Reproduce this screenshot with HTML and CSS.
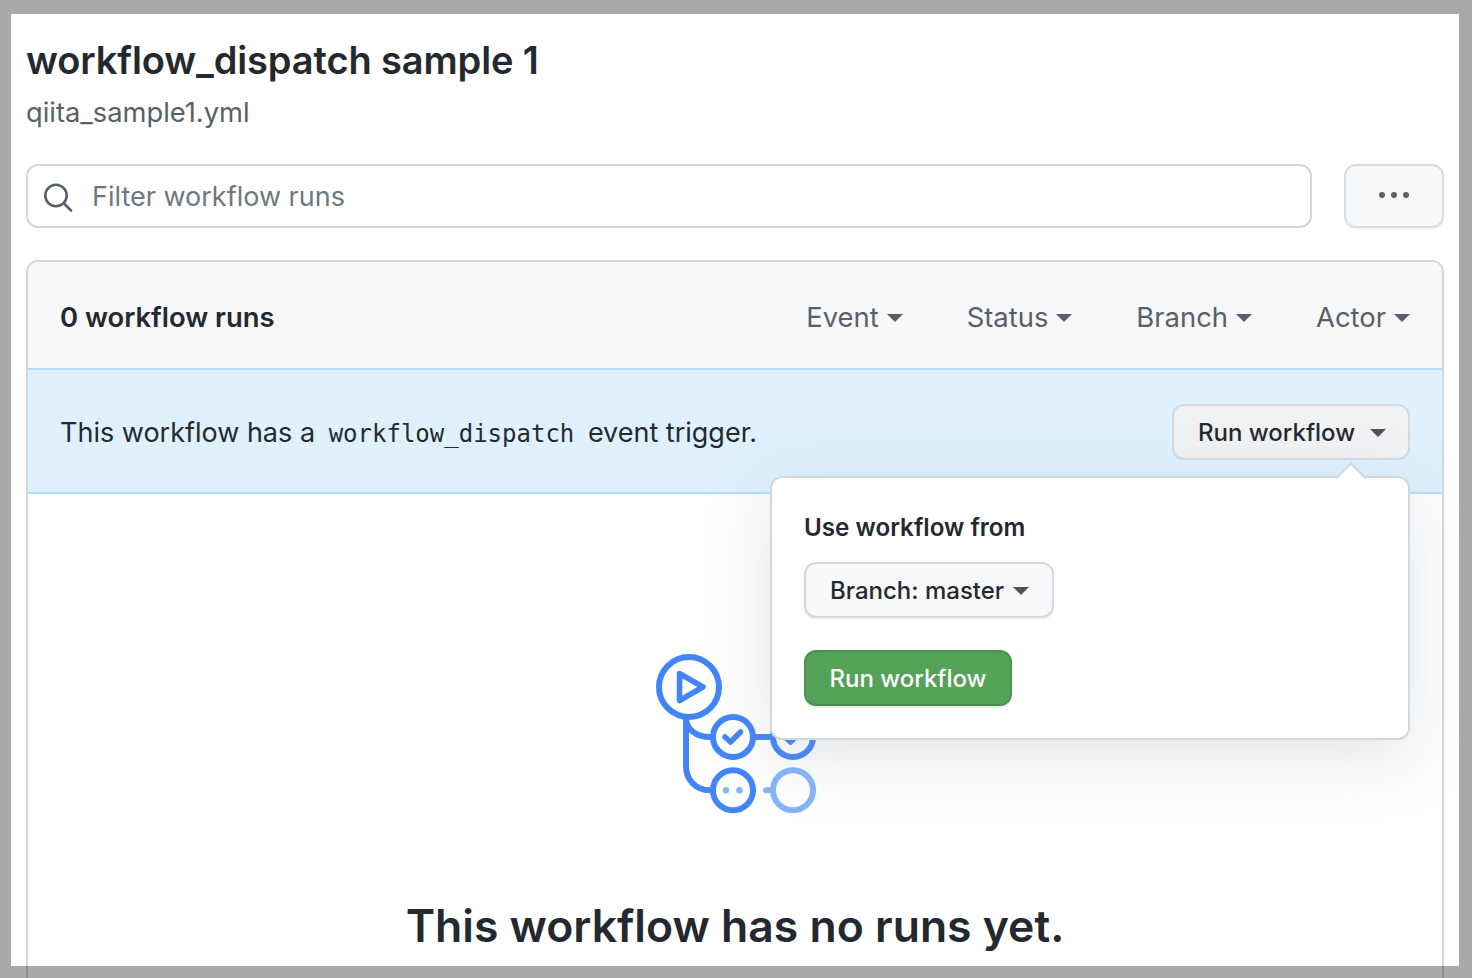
FILE: index.html
```html
<!DOCTYPE html>
<html lang="en">
<head>
<meta charset="utf-8">
<title>workflow_dispatch sample 1</title>
<link rel="stylesheet" href="styles.css">
</head>
<body>
<main class="page">
  <h1 class="title">workflow_dispatch sample 1</h1>
  <p class="subtitle">qiita_sample1.yml</p>
  <div class="search-row">
    <div class="search">
      <svg class="search-icon" viewBox="0 0 32 32" width="32" height="32" fill="none" stroke="#57606a" stroke-width="2.600" stroke-linecap="round"><circle cx="14" cy="15.500" r="10.700"/><path d="M22 23.500l7 7"/></svg>
      <span class="placeholder">Filter workflow runs</span>
    </div>
    <button class="more" type="button" aria-label="More"><i class="dot"></i><i class="dot"></i><i class="dot"></i></button>
  </div>
  <section class="box">
    <header class="box-head">
      <strong class="count">0 workflow runs</strong>
      <nav class="filters">
        <span class="filter">Event<i class="caret"></i></span>
        <span class="filter">Status<i class="caret"></i></span>
        <span class="filter">Branch<i class="caret"></i></span>
        <span class="filter">Actor<i class="caret"></i></span>
      </nav>
    </header>
    <div class="banner">
      <p class="banner-text">This workflow has a <code class="code">workflow_dispatch</code> event trigger.</p>
      <button class="btn btn-run" type="button">Run workflow<i class="caret caret-dark"></i></button>
    </div>
    <div class="popover">
      <svg class="arrow" viewBox="0 0 32 17" width="32" height="17"><path d="M1 16.500L16 1.500l15 15" fill="#fff" stroke="#d0d7de" stroke-width="2"/></svg>
      <div class="pop-label">Use workflow from</div>
      <button class="btn btn-branch" type="button">Branch: master<i class="caret caret-dark"></i></button>
      <button class="btn-green" type="button">Run workflow</button>
    </div>
    <div class="blank">
      <svg class="art" viewBox="654 652 162 164" width="162" height="164" fill="none" stroke="#4285fb" stroke-width="6" stroke-linecap="round" stroke-linejoin="round">
        <path d="M686 718v48c0 14 10 24.300 24 24.300M686 718c0 11 10 19 24 19M756 737h14"/>
        <circle cx="689" cy="687" r="30" fill="#fff"/>
        <path d="M679.500 673.500L703 687l-23.500 13.500z" stroke-width="5.500"/>
        <circle cx="733" cy="737" r="20" fill="#fff"/>
        <path d="M725 737l5.500 5 10-10" stroke-width="5.500"/>
        <circle cx="793" cy="737" r="20" fill="#fff"/>
        <path d="M785 737l5.500 5 10-10" stroke-width="5.500"/>
        <circle cx="733" cy="790.300" r="20" fill="#fff"/>
        <circle cx="726" cy="790.300" r="3.200" fill="#85b5fd" stroke="none"/>
        <circle cx="739.500" cy="790.300" r="3.200" fill="#85b5fd" stroke="none"/>
        <circle cx="793" cy="790.300" r="20" stroke="#85b5fd"/>
        <path d="M766 790.300h3" stroke="#85b5fd"/>
      </svg>
      <h2 class="blank-title">This workflow has no runs yet.</h2>
    </div>
  </section>
</main>
<div class="frame"></div>
</body>
</html>
```
FILE: styles.css
```css
* { box-sizing: border-box; }
html, body { margin: 0; height: 978px; overflow: hidden; background: #fff; }
body { font-family: Inter, "Liberation Sans", sans-serif; color: #24292f; position: relative; }
.frame { position: absolute; inset: 0; border-style: solid; border-width: 14px 13px 12px 11px; border-color: rgba(0,0,0,.337); pointer-events: none; z-index: 10; }
.page { padding: 36px 28px 0 26px; }
.title { margin: 0; font-size: 38px; line-height: 48px; font-weight: 600; letter-spacing: -.12px; }
.subtitle { margin: 11px 0 0; font-size: 27.300px; line-height: 35px; color: #57606a; }
.search-row { display: flex; gap: 32px; margin-top: 34px; }
.search { flex: 1; height: 64px; border: 2px solid #d0d7de; border-radius: 12px; display: flex; align-items: center; padding-left: 14px; gap: 18px; background: #fff; }
.search-icon { display: block; }
.placeholder { font-size: 27px; line-height: 34px; padding-top: 2px; color: #6e7781; }
.more { width: 100px; height: 64px; border: 2px solid #d8dde2; border-radius: 12px; background: #f6f8fa; display: flex; align-items: center; justify-content: center; gap: 6px; padding: 0 0 2px; box-shadow: 0 2px 0 rgba(27,31,36,.04); }
.dot { width: 6px; height: 6px; border-radius: 50%; background: #57606a; display: block; }
.box { position: relative; margin-top: 32px; border: 2px solid #d0d7de; border-radius: 12px; height: 900px; }
.box-head { height: 106px; background: #f6f8fa; border-radius: 10px 10px 0 0; display: flex; align-items: center; justify-content: space-between; padding: 4px 32px 0; }
.count { font-size: 27.400px; font-weight: 600; }
.filters { display: flex; gap: 64px; }
.filter { display: flex; align-items: center; gap: 8px; font-size: 27.400px; color: #57606a; }
.caret { display: block; width: 0; height: 0; margin-top: 2px; border-style: solid; border-width: 8px 8px 0; border-color: #57606a transparent transparent; }
.caret-dark { border-top-color: #4d545b; }
.banner { height: 126px; background: #dff1fe; border-top: 2px solid #b6dcfb; border-bottom: 2px solid #b6dcfb; display: flex; align-items: center; justify-content: space-between; padding: 2px 32px 0; }
.banner-text { margin: 2px 0 0; font-size: 27px; line-height: 36px; white-space: pre-wrap; }
.code { font-family: "DejaVu Sans Mono", "Liberation Mono", monospace; font-size: 24px; padding: 0 6px; }
.btn { display: flex; align-items: center; font-family: inherit; font-size: 24px; font-weight: 500; color: #24292f; height: 56px; border: 2px solid #d5d9dd; border-radius: 12px; background: #f6f8fa; }
.btn-run { width: 238px; padding: 0 0 0 24px; gap: 15px; background: #f1f2f4; }
.btn-branch { width: 250px; padding: 0 0 0 24px; gap: 9px; margin-top: 16px; box-shadow: 0 2px 0 rgba(27,31,36,.04); }
.popover { position: absolute; top: 214px; right: 32px; width: 640px; height: 264px; background: #fff; border: 2px solid #d0d7de; border-radius: 12px; box-shadow: 0 16px 64px rgba(140,149,159,.25); padding: 32px; z-index: 2; }
.arrow { position: absolute; top: -16px; right: 41px; display: block; }
.pop-label { font-size: 24.200px; line-height: 36px; font-weight: 600; }
.btn-green { display: block; margin-top: 32px; width: 208px; height: 56px; font-family: inherit; font-size: 24px; font-weight: 500; color: #fff; background: #54a258; border: 2px solid #4b9250; border-radius: 12px; padding: 0; box-shadow: 0 2px 0 rgba(27,31,36,.08); }
.blank { display: flex; flex-direction: column; align-items: center; padding-top: 158px; }
.art { display: block; }
.blank-title { margin: 82px 0 0; font-size: 44.500px; line-height: 56px; font-weight: 600; }
```
